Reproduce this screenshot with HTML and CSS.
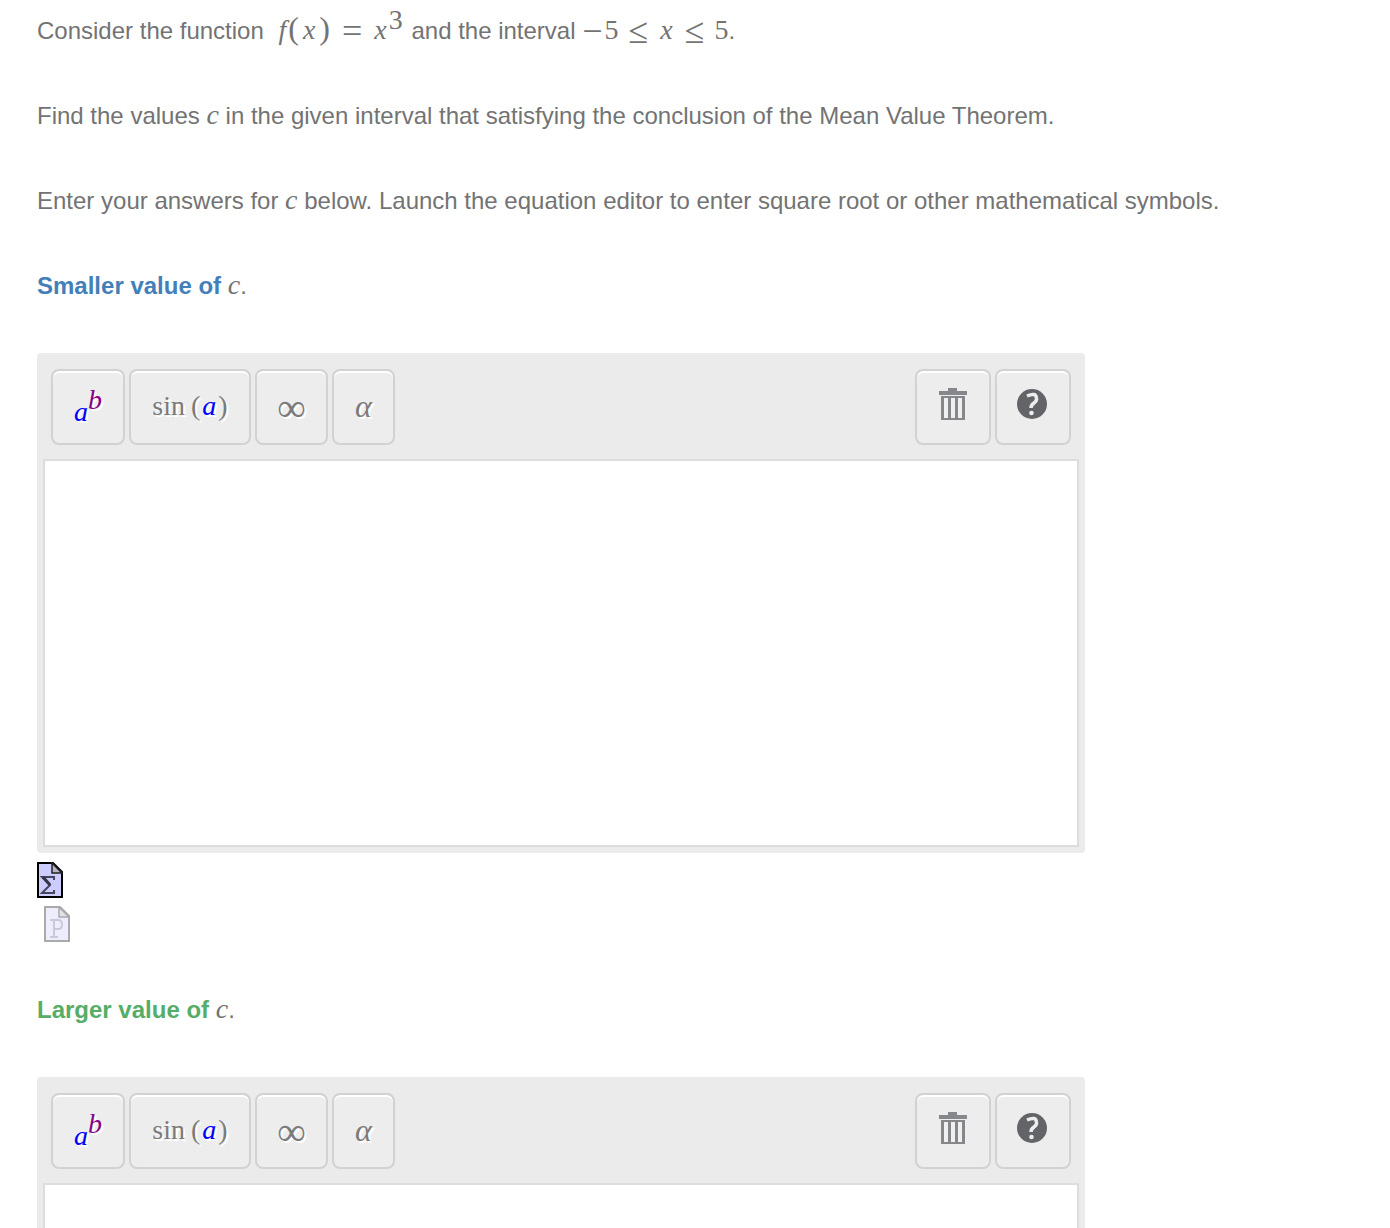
FILE: index.html
```
<!DOCTYPE html>
<html lang="en">
<head>
    <meta charset="UTF-8">
    <meta name="viewport" content="width=device-width, initial-scale=1.0">
    <title>Mean Value Theorem</title>
    <link rel="stylesheet" href="styles.css">
</head>
<body>
    <!-- shared icons -->
    <svg class="sprite" aria-hidden="true">
        <symbol id="trash" viewBox="0 0 28 32">
            <path d="M9 3V0h9v3h10v4H0V3z" fill="#85878a"/>
            <path d="M2 8h24v24H2z" fill="#85878a"/>
            <path d="M5 10h4v20H5zM12 10h4v20h-4zM19 10h4v20h-4z" fill="#f0f0f0"/>
        </symbol>
        <symbol id="help" viewBox="0 0 32 32">
            <circle cx="15" cy="16" r="15" fill="#636467"/>
            <path d="M10 8Q19 4 19.500 10Q20 13 17 15Q14 17 14 20" fill="none" stroke="#ededed" stroke-width="3.500"/>
            <circle cx="14.500" cy="25" r="2.300" fill="#ededed"/>
        </symbol>
        <symbol id="sigma-page" viewBox="0 0 26 36">
            <path d="M1 1h15l9 9v25H1z" fill="#ccccff" stroke="#000" stroke-width="2"/>
            <path d="M15 1v10h10z" fill="#b5b5c4" stroke="#222" stroke-width="1.500"/>
            <path d="M17 18v-3H5l8 8-8 8h12v-3" fill="none" stroke="#44445c" stroke-width="2"/>
            <path d="M6 15l7 8" fill="none" stroke="#34344b" stroke-width="3"/>
        </symbol>
        <symbol id="p-page" viewBox="0 0 26 36">
            <path d="M1 1h15l9 9v25H1z" fill="#ededfd" stroke="#aaa" stroke-width="2"/>
            <path d="M15 1v10h10z" fill="#e2e2e8" stroke="#aaa" stroke-width="1.500"/>
            <path d="M6 14h8q4 0 4 4.500T14 23h-4M10 14v17M6 31h8" fill="none" stroke="#c9c9d8" stroke-width="2"/>
        </symbol>
    </svg>

    <main class="question">
        <p>Consider the function <span class="math lead"><i>f</i><span class="paren">(</span><i class="x">x</i><span class="paren">)</span><span class="op">=</span><i class="x">x</i><sup>3</sup></span> and the interval <span class="math"><span class="minus">−</span>5<span class="op">≤</span><i class="x">x</i><span class="op">≤</span>5</span>.</p>
        <p>Find the values <i class="math">c</i> in the given interval that satisfying the conclusion of the Mean Value Theorem.</p>
        <p>Enter your answers for <i class="math">c</i> below. Launch the equation editor to enter square root or other mathematical symbols.</p>

        <p><label for="smaller"><strong class="blue">Smaller value of</strong> <i class="math">c</i>.</label></p>
        <div class="editor">
            <div class="toolbar">
                <button type="button" class="tool power" aria-label="Power"><i class="a">a</i><sup class="b">b</sup></button>
                <button type="button" class="tool sine" aria-label="Sine">sin<span class="arg">(<i class="a">a</i>)</span></button>
                <button type="button" class="tool infinity" aria-label="Symbols">∞</button>
                <button type="button" class="tool alpha" aria-label="Greek letters"><i>α</i></button>
                <button type="button" class="tool icon clear" aria-label="Clear"><svg class="trash-icon"><use href="#trash"/></svg></button>
                <button type="button" class="tool icon" aria-label="Help"><svg class="help-icon"><use href="#help"/></svg></button>
            </div>
            <textarea id="smaller" class="answer"></textarea>
        </div>
        <div class="links">
            <a href="#smaller" aria-label="Equation editor"><svg class="page-icon"><use href="#sigma-page"/></svg></a>
            <a href="#smaller" class="preview" aria-label="Preview"><svg class="page-icon"><use href="#p-page"/></svg></a>
        </div>

        <p><label for="larger"><strong class="green">Larger value of</strong> <i class="math">c</i>.</label></p>
        <div class="editor">
            <div class="toolbar">
                <button type="button" class="tool power" aria-label="Power"><i class="a">a</i><sup class="b">b</sup></button>
                <button type="button" class="tool sine" aria-label="Sine">sin<span class="arg">(<i class="a">a</i>)</span></button>
                <button type="button" class="tool infinity" aria-label="Symbols">∞</button>
                <button type="button" class="tool alpha" aria-label="Greek letters"><i>α</i></button>
                <button type="button" class="tool icon clear" aria-label="Clear"><svg class="trash-icon"><use href="#trash"/></svg></button>
                <button type="button" class="tool icon" aria-label="Help"><svg class="help-icon"><use href="#help"/></svg></button>
            </div>
            <textarea id="larger" class="answer"></textarea>
        </div>
    </main>
</body>
</html>
```

FILE: styles.css
```
* {
    box-sizing: border-box;
}
body {
    margin: 0;
    height: 100vh;
    overflow: hidden;
    background-color: #fff;
    color: #737373;
    font-family: "Liberation Sans", Arial, sans-serif;
    font-size: 24px;
    line-height: 35px;
}
.sprite {
    display: none;
}
.question {
    padding: 13px 37px;
}
p {
    margin: 0 0 50px;
}
sup {
    line-height: 0;
    vertical-align: 10px;
    font-size: 28px;
}
.math {
    font-family: "Liberation Serif", "Times New Roman", serif;
    font-size: 28px;
    line-height: 0;
}
.lead {
    margin: 0 2px 0 8px;
}
.paren {
    margin: 0 2px;
    font-size: 32px;
}
.x {
    margin: 0 2px;
}
.minus,
.op {
    font-size: 36px;
    vertical-align: -4px;
}
.minus {
    margin-right: 2px;
}
.op {
    margin: 0 10px;
}
.blue {
    color: #437fb9;
}
.green {
    color: #55ad68;
}

/* equation editor */
.editor {
    max-width: 1048px;
    height: 500px;
    padding: 6px;
    display: flex;
    flex-direction: column;
    background-color: #ebebeb;
    border-radius: 4px;
}
.toolbar {
    display: flex;
    gap: 4px;
    padding: 10px 8px 14px;
}
.tool {
    height: 76px;
    padding: 0 0 4px;
    display: flex;
    align-items: center;
    justify-content: center;
    background-color: #ededed;
    border: 2px solid #d2d2d2;
    border-radius: 8px;
    box-shadow: inset 0 2px 0 #fff;
    color: #7b7b7b;
    font-family: "Liberation Serif", "Times New Roman", serif;
    font-size: 28px;
    text-shadow: 2px 2px 0 #fff;
    cursor: pointer;
}
.power {
    width: 74px;
    padding-top: 14px;
}
.sine {
    width: 122px;
    padding-bottom: 2px;
}
.arg {
    margin-left: 6px;
}
.arg .a {
    margin: 0 2px;
}
.infinity {
    width: 73px;
    padding-bottom: 0;
    font-size: 40px;
}
.alpha {
    width: 63px;
    padding-bottom: 2px;
    font-size: 32px;
}
.icon {
    width: 76px;
    padding-bottom: 6px;
}
.clear {
    margin-left: auto;
}
.a {
    color: #00f;
}
.b {
    padding-bottom: 24px;
    color: #808;
    font-style: italic;
}
.trash-icon {
    width: 28px;
    height: 32px;
}
.help-icon {
    width: 32px;
    height: 32px;
}
.answer {
    flex: 1;
    width: 100%;
    padding: 8px;
    border: 2px solid #ddd;
    background-color: #fff;
    font: inherit;
    resize: none;
    outline: none;
}
.links {
    display: flex;
    flex-direction: column;
    align-items: flex-start;
    gap: 8px;
    padding: 9px 0 50px;
}
.links a,
.page-icon {
    display: block;
}
.page-icon {
    width: 26px;
    height: 36px;
}
.preview {
    margin-left: 7px;
}
```
